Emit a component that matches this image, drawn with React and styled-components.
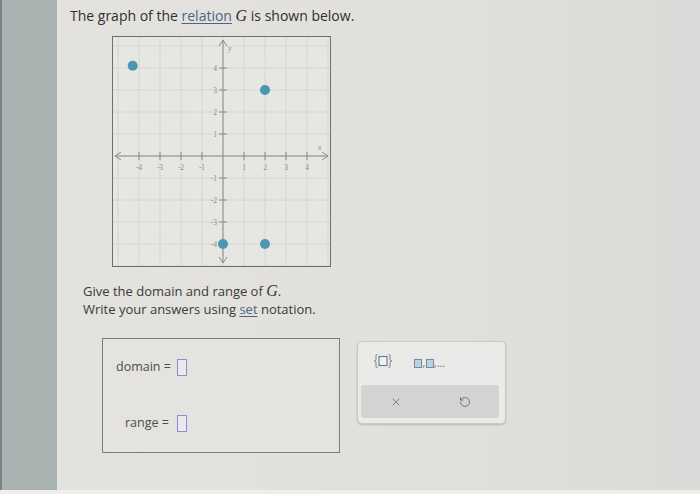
import React from "react";
import styled, { createGlobalStyle } from "styled-components";
import { X, RotateCcw } from "lucide-react";

const GlobalStyle = createGlobalStyle`
  html, body {
    margin: 0;
    padding: 0;
    background: #e2e1dd;
  }
  body {
    font-family: "Open Sans", "Liberation Sans", Arial, sans-serif;
  }
`;

const Page = styled.div`
  width: 700px;
  height: 494px;
  display: flex;
  flex-direction: column;
  overflow: hidden;
`;

const Screen = styled.div`
  flex: 1;
  display: flex;
`;

const Sidebar = styled.div`
  width: 57px;
  flex-shrink: 0;
  background: #a9b3b2;
  border-left: 2px solid #7b8485;
  box-sizing: border-box;
`;

const Main = styled.div`
  flex: 1;
  padding: 6px 0 0 13px;
  background: linear-gradient(90deg, #e3e2de 0%, #e1e0dc 60%, #dcdad8 100%);
  display: flex;
  flex-direction: column;
`;

const BottomEdge = styled.div`
  height: 4px;
  background: #efeeeb;
`;

const Title = styled.div`
  font-size: 14px;
  line-height: 20px;
  color: #2f2f2f;
  font-weight: 500;
`;

const Link = styled.span`
  color: #4b6680;
  text-decoration: underline;
  text-underline-offset: 2px;
`;

const MathVar = styled.span`
  font-family: "Liberation Serif", "Times New Roman", serif;
  font-style: italic;
  font-size: 16px;
`;

const GraphFrame = styled.div`
  margin: 10px 0 0 42px;
  width: 217px;
  height: 229px;
  border: 1.5px solid #6f6f6f;
  background: #e6e6e3;
  line-height: 0;
`;

const Prompt = styled.div`
  margin: 15px 0 0 13px;
  font-size: 13px;
  line-height: 18px;
  color: #3a3a3a;
  font-weight: 500;
`;

const AnswerRow = styled.div`
  margin: 20px 0 0 32px;
  display: flex;
  align-items: flex-start;
  gap: 17px;
`;

const AnswerBox = styled.div`
  width: 238px;
  height: 115px;
  box-sizing: border-box;
  border: 1.5px solid #7c7c7c;
  background: #e4e3df;
  display: grid;
  grid-template-columns: max-content max-content;
  align-content: space-between;
  column-gap: 6px;
  padding: 19px 0 20px 13px;
`;

const FieldLabel = styled.div`
  font-size: 12.5px;
  line-height: 18px;
  color: #4d4d4d;
  text-align: right;
  padding-right: ${(p) => (p.$shift ? p.$shift : 0)}px;
`;

const Slot = styled.div`
  width: 8px;
  height: 15px;
  border: 1px solid #8b8fd2;
  background: #e9e9ee;
  margin-top: 1px;
`;

const Keypad = styled.div`
  margin-top: 3px;
  width: 149px;
  height: 83px;
  box-sizing: border-box;
  border: 1px solid #c9c9c7;
  border-radius: 5px;
  background: #eaeae8;
  box-shadow: 0 1px 2px rgba(0, 0, 0, 0.18);
  padding: 10px 6px 5px 3px;
  display: flex;
  flex-direction: column;
  justify-content: space-between;
`;

const KeyRow = styled.div`
  display: flex;
  align-items: center;
  gap: 21px;
  padding-left: 12px;
  height: 18px;
`;

const ActionBar = styled.div`
  height: 33px;
  border-radius: 3px;
  background: #d3d3d1;
  display: flex;
  align-items: center;
  justify-content: space-around;
  color: #5a5a5a;
`;

const MiniBox = styled.span`
  display: inline-block;
  width: 6px;
  height: 7px;
  border: 1px solid #7a8a9a;
  background: #b9d3e6;
  vertical-align: -1px;
`;

const ListKey = styled.div`
  font-size: 10px;
  line-height: 10px;
  color: #6a6a6a;
  margin-top: 3px;
  white-space: nowrap;
`;

const Comma = styled.span`
  margin: 0 0.5px;
`;

const ox = 110;
const oy = 119;
const ux = 21;
const uy = 22;
const ticks = [-4, -3, -2, -1, 1, 2, 3, 4];
const grid = [-5, -4, -3, -2, -1, 0, 1, 2, 3, 4, 5];
const points = [
  [-4.3, 4.1],
  [2, 3],
  [0, -4],
  [2, -4],
];

function Graph() {
  const gx = (v) => ox + v * ux;
  const gy = (v) => oy - v * uy;
  return (
    <svg width="217" height="229" viewBox="0 0 217 229">
      {grid.map((i) => (
        <line key={"v" + i} x1={gx(i)} y1="0" x2={gx(i)} y2="229" stroke="#cbcbc8" strokeWidth="1" strokeDasharray="1.5 1" />
      ))}
      {grid.map((j) => (
        <line key={"h" + j} x1="0" y1={gy(j)} x2="217" y2={gy(j)} stroke="#cbcbc8" strokeWidth="1" strokeDasharray="1.5 1" />
      ))}
      <line x1="2" y1={oy} x2="215" y2={oy} stroke="#8a8a8a" strokeWidth="1" />
      <line x1={ox} y1="3" x2={ox} y2="226" stroke="#8a8a8a" strokeWidth="1" />
      <polyline points={`8,${oy - 4} 2,${oy} 8,${oy + 4}`} fill="none" stroke="#8a8a8a" />
      <polyline points={`209,${oy - 4} 215,${oy} 209,${oy + 4}`} fill="none" stroke="#8a8a8a" />
      <polyline points={`${ox - 4},9 ${ox},3 ${ox + 4},9`} fill="none" stroke="#8a8a8a" />
      <polyline points={`${ox - 4},220 ${ox},226 ${ox + 4},220`} fill="none" stroke="#8a8a8a" />
      {ticks.map((t) => (
        <g key={"tx" + t}>
          <line x1={gx(t)} y1={oy - 4} x2={gx(t)} y2={oy + 4} stroke="#8a8a8a" />
          <text x={gx(t)} y={oy + 14} fontSize="7.5" textAnchor="middle" fill="#8c8c8c" fontFamily="Liberation Serif, serif">
            {t}
          </text>
        </g>
      ))}
      {ticks.map((t) => (
        <g key={"ty" + t}>
          <line x1={ox - 4} y1={gy(t)} x2={ox + 4} y2={gy(t)} stroke="#8a8a8a" />
          <text x={ox - 6} y={gy(t) + 2.5} fontSize="7.5" textAnchor="end" fill="#8c8c8c" fontFamily="Liberation Serif, serif">
            {t}
          </text>
        </g>
      ))}
      <text x="205" y={oy - 6} fontSize="8" fontStyle="italic" fill="#8c8c8c" fontFamily="Liberation Serif, serif">x</text>
      <text x={ox + 5} y="14" fontSize="8" fontStyle="italic" fill="#8c8c8c" fontFamily="Liberation Serif, serif">y</text>
      {points.map(([x, y]) => (
        <circle key={x + "," + y} cx={gx(x)} cy={gy(y)} r="5" fill="#4a97b2" />
      ))}
    </svg>
  );
}

function SetIcon() {
  return (
    <svg width="20" height="16" viewBox="0 0 20 16">
      <path d="M4.5 1.5 C2.5 1.5 3 3 3 5.5 C3 7 2.5 8 1.2 8 C2.5 8 3 9 3 10.5 C3 13 2.5 14.5 4.5 14.5" fill="none" stroke="#7a7a7a" strokeWidth="1" />
      <path d="M15.5 1.5 C17.5 1.5 17 3 17 5.5 C17 7 17.5 8 18.8 8 C17.5 8 17 9 17 10.5 C17 13 17.5 14.5 15.5 14.5" fill="none" stroke="#7a7a7a" strokeWidth="1" />
      <rect x="6" y="3.5" width="8" height="9" fill="#eef2f5" stroke="#6f7f8f" strokeWidth="1.2" />
    </svg>
  );
}

export default function App() {
  return (
    <Page>
      <GlobalStyle />
      <Screen>
        <Sidebar />
        <Main>
          <Title>
            The graph of the <Link>relation</Link> <MathVar>G</MathVar> is shown below.
          </Title>
          <GraphFrame>
            <Graph />
          </GraphFrame>
          <Prompt>
            Give the domain and range of <MathVar>G</MathVar>.
            <br />
            Write your answers using <Link>set</Link> notation.
          </Prompt>
          <AnswerRow>
            <AnswerBox>
              <FieldLabel>domain =</FieldLabel>
              <Slot />
              <FieldLabel $shift={2}>range =</FieldLabel>
              <Slot />
            </AnswerBox>
            <Keypad>
              <KeyRow>
                <SetIcon />
                <ListKey>
                  <MiniBox />
                  <Comma>,</Comma>
                  <MiniBox />
                  <Comma>,</Comma>...
                </ListKey>
              </KeyRow>
              <ActionBar>
                <X size={12} strokeWidth={1.3} />
                <RotateCcw size={12} strokeWidth={1.5} />
              </ActionBar>
            </Keypad>
          </AnswerRow>
        </Main>
      </Screen>
      <BottomEdge />
    </Page>
  );
}
